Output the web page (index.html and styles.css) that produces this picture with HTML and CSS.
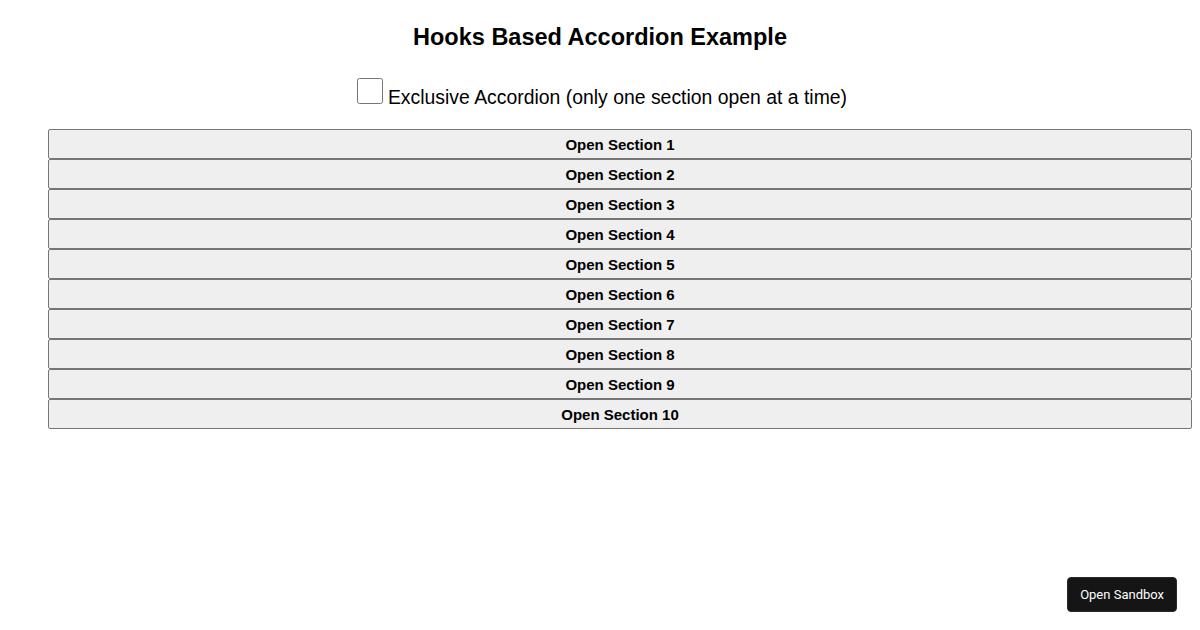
FILE: index.html
```html
<!DOCTYPE html>
<html lang="en">
<head>
    <meta charset="UTF-8">
    <meta name="viewport" content="width=device-width, initial-scale=1.0">
    <title>Hooks Based Accordion Example</title>
    <link rel="stylesheet" href="styles.css">
</head>
<body>
<div class="app">
    <h2 class="title">Hooks Based Accordion Example</h2>
    <div class="toggle">
        <label>
            <input type="checkbox" id="exclusive">Exclusive Accordion (only one section open at a time)
        </label>
    </div>
    <div class="accordion">
        <button class="section-btn">Open Section 1</button>
        <button class="section-btn">Open Section 2</button>
        <button class="section-btn">Open Section 3</button>
        <button class="section-btn">Open Section 4</button>
        <button class="section-btn">Open Section 5</button>
        <button class="section-btn">Open Section 6</button>
        <button class="section-btn">Open Section 7</button>
        <button class="section-btn">Open Section 8</button>
        <button class="section-btn">Open Section 9</button>
        <button class="section-btn">Open Section 10</button>
    </div>
</div>
<a class="sandbox-btn" href="#">Open Sandbox</a>
</body>
</html>
```

FILE: styles.css
```css
*, *:before, *:after {
    box-sizing: border-box;
}

body {
    font-family: 'Liberation Sans', Arial, sans-serif;
    margin: 8px;
    color: #000000;
    background-color: #ffffff;
}

.title {
    text-align: center;
    font-size: 23.5px;
    margin: 15px 0 0;
    line-height: 28px;
}

.toggle {
    text-align: center;
    font-size: 19.4px;
    margin-top: 27px;
    padding-left: 4px;
}

.toggle input {
    width: 26px;
    height: 26px;
    margin: 0 5px 0 0;
    vertical-align: baseline;
}

.accordion {
    margin-top: 20px;
    padding-left: 40px;
}

.section-btn {
    display: block;
    width: 100%;
    height: 30px;
    font-family: 'Liberation Sans', Arial, sans-serif;
    font-size: 15px;
    font-weight: bold;
    color: #000000;
    background-color: #efefef;
    border: 1px solid #767676;
    border-radius: 2px;
    padding: 0;
}

.sandbox-btn {
    position: fixed;
    right: 23px;
    bottom: 18px;
    padding: 9px 12px;
    background-color: #151515;
    color: #ffffff;
    font-family: Roboto, 'Liberation Sans', sans-serif;
    font-size: 13px;
    line-height: 15px;
    border-radius: 4px;
    border: 1px solid #2a2a2a;
    text-decoration: none;
}
```
